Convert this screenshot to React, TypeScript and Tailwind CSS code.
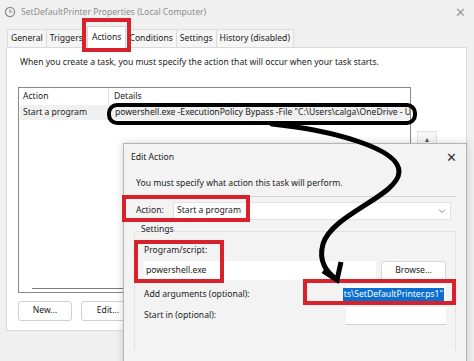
import React from "react";

const font = { fontFamily: '"Noto Sans", "Open Sans", sans-serif' };

function RedBox({ className }: { className: string }) {
  return <div className={`absolute border-[4px] border-[#d7212b] pointer-events-none ${className}`} />;
}

export default function App() {
  return (
    <div className="relative w-[474px] h-[361px] overflow-hidden bg-[#f0f0f0] text-[8.6px] text-[#1a1a1a]" style={font}>
      {/* Title bar */}
      <div className="flex items-center h-[24px] pl-[4px] pr-[8px] text-[#8c8c8c] text-[8.6px]">
        <svg width="12" height="12" viewBox="0 0 12 12" className="mr-[5px]">
          <circle cx="6" cy="6" r="4.6" fill="none" stroke="#8c8c8c" strokeWidth="1.2" />
          <path d="M6 3.2 V6 H8.2" fill="none" stroke="#8c8c8c" strokeWidth="1.1" />
        </svg>
        <span>SetDefaultPrinter Properties (Local Computer)</span>
        <span className="ml-auto text-[13px] text-[#9a9a9a] leading-none">✕</span>
      </div>

      {/* Tabs */}
      <div className="flex items-end h-[22px] mt-[1px] pl-[7px]">
        {["General", "Triggers", "Actions", "Conditions", "Settings", "History (disabled)"].map((t) =>
          t === "Actions" ? (
            <div key={t} className="h-[22px] px-[4px] flex items-center bg-white border border-b-0 border-[#d6d6d6] -mb-px relative z-10">
              {t}
            </div>
          ) : (
            <div key={t} className="h-[18px] px-[3px] flex items-center bg-[#f5f5f5] border border-b-0 border-l-0 first:border-l border-[#dcdcdc]">
              {t}
            </div>
          )
        )}
      </div>

      {/* Main pane */}
      <div className="ml-[6px] w-[461px] h-[284px] bg-white border border-[#d9d9d9] pt-[8px] pl-[11px]">
        <div className="pl-[2px]">When you create a task, you must specify the action that will occur when your task starts.</div>
        <div className="flex mt-[18px]">
          <div className="w-[393px] h-[206px] shrink-0 border border-[#8a8a8a] flex flex-col overflow-hidden">
            <div className="flex h-[17px] items-center">
              <div className="w-[90px] shrink-0 pl-[4px] border-r border-[#e3e3e3] h-full flex items-center">Action</div>
              <div className="pl-[5px]">Details</div>
            </div>
            <div className="flex h-[15px] items-center bg-[#f0f0f0] mx-[1px]">
              <div className="w-[90px] shrink-0 pl-[3px] whitespace-nowrap">Start a program</div>
              <div className="pl-[5px] whitespace-nowrap">powershell.exe -ExecutionPolicy Bypass -File "C:\Users\calga\OneDrive - U</div>
            </div>
            <div className="flex-1" />
            <div className="h-[4px] border-t border-[#7a7a7a] mx-[13px] w-[100px]" />
          </div>
          <div className="ml-[6px] mt-[44px] w-[20px] h-[18px] shrink-0 bg-[#f7f7f7] border border-[#e0e0e0] flex items-center justify-center text-[7px] text-[#555]">▲</div>
        </div>
        <div className="flex gap-[9px] mt-[8px]">
          <div className="w-[54px] h-[20px] border border-[#d0d0d0] bg-white rounded-[3px] flex items-center justify-center">New...</div>
          <div className="w-[54px] h-[20px] border border-[#d0d0d0] bg-white rounded-[3px] flex items-center justify-center">Edit...</div>
        </div>
      </div>

      {/* Edit Action dialog */}
      <div className="absolute left-[123px] top-[143px] w-[344px] h-[230px] bg-[#f3f3f3] border border-[#b5b5b5] shadow-[0_0_8px_rgba(0,0,0,0.18)]">
        <div className="flex items-center h-[26px] pl-[7px] pr-[9px]">
          <span>Edit Action</span>
          <span className="ml-auto text-[13px] text-[#333] leading-none">✕</span>
        </div>
        <div className="pl-[12px] mt-[7px]">You must specify what action this task will perform.</div>
        <div className="ml-[10px] w-[322px] mt-[6px] border-t border-[#d5d5d5]" />
        <div className="flex items-center mt-[5px] pl-[12px]">
          <span className="w-[37px]">Action:</span>
          <div className="w-[278px] h-[18px] bg-white border border-[#e2e2e2] flex items-center pl-[3px]">
            <span>Start a program</span>
            <svg className="ml-auto mr-[4px]" width="8" height="6" viewBox="0 0 8 6">
              <path d="M1 1.5 L4 4.5 L7 1.5" fill="none" stroke="#888" strokeWidth="1" />
            </svg>
          </div>
        </div>
        <div className="pl-[17px] mt-[3px] leading-[12px] relative z-10">Settings</div>
        <div className="ml-[10px] w-[322px] h-[120px] -mt-[4px] border border-[#e3e3e3] border-b-0 pl-[9px] pt-[12px]">
          <div>Program/script:</div>
          <div className="flex mt-[4px]">
            <div className="w-[232px] h-[19px] bg-white flex items-center pl-[2px]">powershell.exe</div>
            <div className="ml-[5px] w-[65px] h-[20px] bg-white border border-[#d8d8d8] rounded-[3px] flex items-center justify-center">Browse...</div>
          </div>
          <div className="flex items-center mt-[4px]">
            <span className="w-[202px]">Add arguments (optional):</span>
            <div className="w-[100px] h-[20px] bg-white flex items-center justify-end pr-[2px]">
              <span className="bg-[#0a6fd0] text-white px-[1px]">ts\SetDefaultPrinter.ps1"</span>
            </div>
          </div>
          <div className="flex items-center mt-[2px]">
            <span className="w-[202px]">Start in (optional):</span>
            <div className="w-[100px] h-[18px] bg-white border-b border-[#cfcfcf]" />
          </div>
        </div>
      </div>

      {/* Annotations */}
      <RedBox className="left-[82px] top-[18px] w-[49px] h-[34px]" />
      <RedBox className="left-[122px] top-[195px] w-[128px] h-[27px]" />
      <RedBox className="left-[134px] top-[240px] w-[90px] h-[43px]" />
      <RedBox className="left-[303px] top-[279px] w-[153px] h-[26px]" />
      <div className="absolute left-[107px] top-[103px] w-[310px] h-[22px] border-[4px] border-black rounded-[10px] pointer-events-none" />
      <svg className="absolute left-0 top-0 pointer-events-none" width="474" height="361" viewBox="0 0 474 361">
        <path d="M272 124 C330 130 400 148 399 172 C398 196 332 214 323 244 C318 262 327 272 336 279" fill="none" stroke="black" strokeWidth="5" strokeLinecap="round" />
        <path d="M323 271 L337 280 L341 262" fill="none" stroke="black" strokeWidth="5" strokeLinejoin="miter" />
      </svg>
    </div>
  );
}
